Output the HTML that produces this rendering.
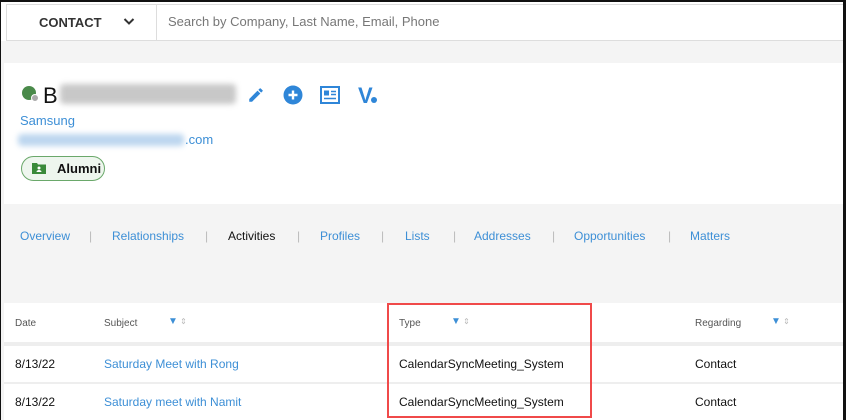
<!DOCTYPE html>
<html><head><meta charset="utf-8"><style>
*{margin:0;padding:0;box-sizing:border-box}
body{width:846px;height:420px;overflow:hidden;background:#f4f4f4;font-family:"Liberation Sans",sans-serif;position:relative}
.frame{position:absolute;inset:0;border:1px solid #111;border-top-width:2px;border-right-width:3px;border-bottom:none;pointer-events:none;z-index:10}
.a{position:absolute}
.blue{color:#3d8fd6}
.blur{position:absolute;background:#c8c8c8;filter:blur(3px);border-radius:4px}
.t{position:absolute;top:229px;font-size:12px;white-space:nowrap}
.s{position:absolute;top:229px;font-size:12px;color:#bbb}
</style></head><body>
<div class="frame"></div>
<div class="a" style="left:0;top:0;width:846px;height:41px;background:#fff"></div>
<div class="a" style="left:6px;top:4px;width:840px;height:37px;border:1px solid #ddd;background:#fff"></div>
<div class="a" style="left:156px;top:4px;width:1px;height:37px;background:#ddd"></div>
<div class="a" style="left:39px;top:15px;font-size:13px;font-weight:bold;color:#333">CONTACT</div>
<svg class="a" style="left:123px;top:17px" width="12" height="9" viewBox="0 0 12 9"><path d="M1.5 2 6 6.5 10.5 2" fill="none" stroke="#333" stroke-width="2"/></svg>
<div class="a" style="left:168px;top:14px;font-size:13px;color:#777">Search by Company, Last Name, Email, Phone</div>

<div class="a" style="left:4px;top:63px;width:840px;height:141px;background:#fff"></div>
<div class="a" style="left:22px;top:86px;width:14px;height:14px;border-radius:50%;background:#4a8a4a"></div>
<div class="a" style="left:31px;top:94px;width:8px;height:8px;border-radius:50%;background:#aaa;border:1px solid #fff"></div>
<div class="a" style="left:43px;top:83px;font-size:22px;color:#111">B</div>
<div class="blur" style="left:60px;top:84px;width:176px;height:20px"></div>
<svg class="a" style="left:247px;top:86px" width="18" height="18" viewBox="0 0 24 24"><path d="M3 17.25V21h3.75L17.8 9.94l-3.75-3.75L3 17.25zM20.7 7.04a1 1 0 000-1.41l-2.340-2.34a1 1 0 00-1.41 0l-1.83 1.83 3.75 3.75 1.83-1.83z" fill="#2f86d8"/></svg>
<svg class="a" style="left:283px;top:85px" width="20" height="20" viewBox="0 0 20 20"><circle cx="10" cy="10" r="9.5" fill="#2f86d8"/><path d="M10 5.5v9M5.5 10h9" stroke="#fff" stroke-width="2.4"/></svg>
<svg class="a" style="left:320px;top:86px" width="20" height="18" viewBox="0 0 20 18"><rect x="1" y="1" width="18" height="16" fill="none" stroke="#2f86d8" stroke-width="2"/><rect x="4" y="4.5" width="5" height="5" fill="#2f86d8"/><path d="M11 5.5h5M11 8.5h5M4 12.5h12" stroke="#2f86d8" stroke-width="1.6"/></svg>
<div class="a" style="left:358px;top:83px;font-size:22px;font-weight:bold;color:#2f86d8">V</div>
<div class="a" style="left:371px;top:97px;width:6px;height:6px;border-radius:50%;background:#2f86d8"></div>
<div class="a blue" style="left:20px;top:113px;font-size:13px">Samsung</div>
<div class="blur" style="left:18px;top:134px;width:166px;height:12px;background:#bcd6ef"></div>
<div class="a blue" style="left:185px;top:132px;font-size:13px">.com</div>
<div class="a" style="left:21px;top:156px;width:84px;height:25px;border:1px solid #6aa86a;border-radius:13px;background:#eef6ee"></div>
<svg class="a" style="left:32px;top:162px" width="14" height="12" viewBox="0 0 14 12"><path d="M0 1h5l1 1.5h8V12H0z" fill="#3a8a3a"/><circle cx="7" cy="6" r="1.5" fill="#fff"/><path d="M4.5 10a2.5 2 0 015 0z" fill="#fff"/></svg>
<div class="a" style="left:57px;top:161px;font-size:13px;font-weight:bold;color:#111">Alumni</div>

<div class="t blue" style="left:20px">Overview</div>
<div class="s" style="left:89px">|</div>
<div class="t blue" style="left:112px">Relationships</div>
<div class="s" style="left:205px">|</div>
<div class="t" style="left:228px;color:#111">Activities</div>
<div class="s" style="left:297px">|</div>
<div class="t blue" style="left:320px">Profiles</div>
<div class="s" style="left:381px">|</div>
<div class="t blue" style="left:405px">Lists</div>
<div class="s" style="left:453px">|</div>
<div class="t blue" style="left:474px">Addresses</div>
<div class="s" style="left:552px">|</div>
<div class="t blue" style="left:574px">Opportunities</div>
<div class="s" style="left:668px">|</div>
<div class="t blue" style="left:690px">Matters</div>

<div class="a" style="left:4px;top:303px;width:840px;height:117px;background:#fff"></div>
<div class="a" style="left:4px;top:342px;width:840px;height:4px;background:#eee"></div>
<div class="a" style="left:4px;top:382px;width:840px;height:2px;background:#eee"></div>
<div class="a" style="left:15px;top:318px;font-size:10px;color:#555">Date</div>
<div class="a" style="left:104px;top:318px;font-size:10px;color:#555">Subject</div>
<div class="a" style="left:399px;top:318px;font-size:10px;color:#555">Type</div>
<div class="a" style="left:695px;top:318px;font-size:10px;color:#555">Regarding</div>
<div class="a" style="left:168px;top:316px;font-size:10px;color:#3d8fd6">&#9660;<span style="color:#bbb;font-size:8px"> &#8661;</span></div>
<div class="a" style="left:451px;top:316px;font-size:10px;color:#3d8fd6">&#9660;<span style="color:#bbb;font-size:8px"> &#8661;</span></div>
<div class="a" style="left:771px;top:316px;font-size:10px;color:#3d8fd6">&#9660;<span style="color:#bbb;font-size:8px"> &#8661;</span></div>
<div class="a" style="left:15px;top:357px;font-size:12px;color:#111">8/13/22</div>
<div class="a blue" style="left:104px;top:357px;font-size:12px">Saturday Meet with Rong</div>
<div class="a" style="left:399px;top:357px;font-size:12px;color:#111">CalendarSyncMeeting_System</div>
<div class="a" style="left:695px;top:357px;font-size:12px;color:#111">Contact</div>
<div class="a" style="left:15px;top:395px;font-size:12px;color:#111">8/13/22</div>
<div class="a blue" style="left:104px;top:395px;font-size:12px">Saturday meet with Namit</div>
<div class="a" style="left:399px;top:395px;font-size:12px;color:#111">CalendarSyncMeeting_System</div>
<div class="a" style="left:695px;top:395px;font-size:12px;color:#111">Contact</div>
<div class="a" style="left:387px;top:303px;width:205px;height:115px;border:2px solid #f04a4a"></div>
</body></html>
